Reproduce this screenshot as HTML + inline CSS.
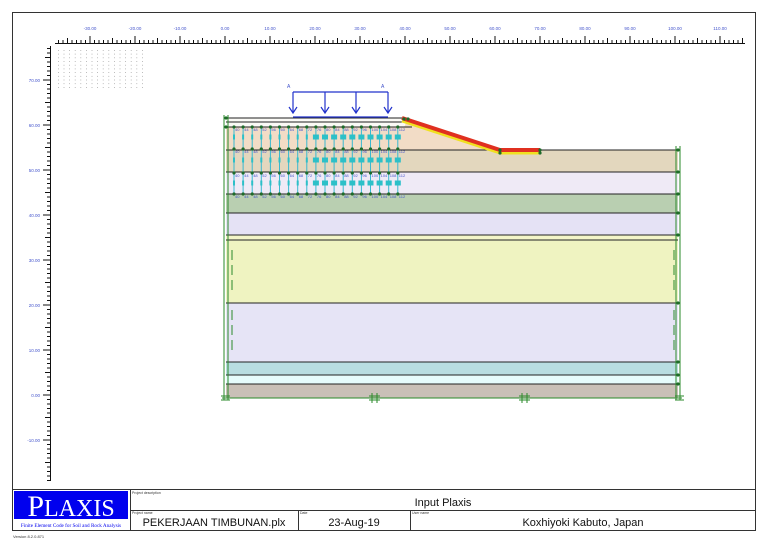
<!DOCTYPE html>
<html><head><meta charset="utf-8"><style>
html,body{margin:0;padding:0;background:#fff;width:768px;height:543px;overflow:hidden;font-family:"Liberation Sans",sans-serif}
svg{position:absolute;left:0;top:0}
</style></head><body>
<svg id="s" width="768" height="543" xmlns="http://www.w3.org/2000/svg" font-family="Liberation Sans, sans-serif">
<rect x="12.5" y="12.5" width="743" height="518" fill="none" stroke="#333" stroke-width="1"/>
<!-- soil layers -->
<rect x="226" y="150" width="452" height="22" fill="#e3d7be"/>
<rect x="226" y="172" width="452" height="22" fill="#efeaf6"/>
<rect x="226" y="194" width="452" height="19" fill="#b9cfb1"/>
<rect x="226" y="213" width="452" height="22" fill="#e5e2f5"/>
<rect x="226" y="235" width="452" height="5" fill="#f3f5c8"/>
<rect x="226" y="240" width="452" height="63" fill="#eff3c1"/>
<rect x="226" y="303" width="452" height="59" fill="#e6e4f6"/>
<rect x="226" y="362" width="452" height="13" fill="#b8dde1"/>
<rect x="226" y="375" width="452" height="9" fill="#e6fcfc"/>
<rect x="226" y="384" width="452" height="14" fill="#c9c0b7"/>
<polygon points="226,127 404,127 408,119 500,150 226,150" fill="#f2dcc6"/>
<rect x="226" y="118" width="178" height="9" fill="#fbfaf6"/>
<g stroke="#222" stroke-width="1">
<line x1="226" y1="118" x2="406" y2="118"/><line x1="226" y1="122" x2="404" y2="122"/><line x1="226" y1="127" x2="412" y2="127"/>
<line x1="226" y1="150" x2="678" y2="150"/><line x1="226" y1="172" x2="678" y2="172"/><line x1="226" y1="194" x2="678" y2="194"/>
<line x1="226" y1="213" x2="678" y2="213"/><line x1="226" y1="235" x2="678" y2="235"/><line x1="226" y1="240" x2="678" y2="240"/>
<line x1="226" y1="303" x2="678" y2="303"/><line x1="226" y1="362" x2="678" y2="362"/><line x1="226" y1="375" x2="678" y2="375"/>
<line x1="226" y1="384" x2="678" y2="384"/>
</g>
<polyline points="402,121 500,153 540,153" fill="none" stroke="#f0e020" stroke-width="3"/>
<polyline points="402,118 500,150 540,150" fill="none" stroke="#e03020" stroke-width="4"/>
<g stroke="#2a8a2a" stroke-width="1" fill="none">
<line x1="224" y1="115" x2="224" y2="400"/><line x1="228" y1="115" x2="228" y2="400"/>
<line x1="676" y1="146" x2="676" y2="400"/><line x1="680" y1="146" x2="680" y2="400"/>
<line x1="222" y1="398" x2="682" y2="398"/>
<path d="M232 250v10M232 265v10M232 280v10M232 310v10M232 325v10M232 340v10M674 250v10M674 265v10M674 280v10M674 310v10M674 325v10M674 340v10" stroke-dasharray="0"/>
<path d="M372 393v10M377 393v10M369 396h11M369 400h11M522 393v10M527 393v10M519 396h11M519 400h11M221 396h9M221 400h9M675 396h9M675 400h9"/>
</g>
<!-- load -->
<g stroke="#2233cc" stroke-width="1.2" fill="none">
<line x1="293" y1="92" x2="388" y2="92"/><line x1="293" y1="117" x2="388" y2="117"/>
<path d="M293 92v21M325 92v21M356 92v21M388 92v21M289 107l4 6 4-6M321 107l4 6 4-6M352 107l4 6 4-6M384 107l4 6 4-6"/>
</g>
<text x="287" y="88" font-size="5" fill="#4455cc">A</text><text x="381" y="88" font-size="5" fill="#4455cc">A</text>
<g id="cols"></g>
<g id="ruler" stroke="#111" stroke-width="1"></g>
<g id="lbl" font-size="4.5" fill="#4455cc"></g>
<!-- title block -->
<g stroke="#333" stroke-width="1" fill="none">
<line x1="12" y1="489.5" x2="756" y2="489.5"/>
<line x1="130.5" y1="489" x2="130.5" y2="531"/>
<line x1="130" y1="510.5" x2="756" y2="510.5"/>
<line x1="298.5" y1="510" x2="298.5" y2="531"/>
<line x1="410.5" y1="510" x2="410.5" y2="531"/>
</g>
<rect x="14" y="491" width="114" height="28" fill="#0000ee"/>
<text x="71" y="516" font-family="Liberation Serif, serif" font-size="30" fill="#fff" text-anchor="middle">P<tspan font-size="24">LAXIS</tspan></text>
<text x="71" y="527" font-family="Liberation Serif, serif" font-size="5.2" fill="#0000ee" text-anchor="middle">Finite Element Code for Soil and Rock Analysis</text>
<text x="13" y="538" font-size="4" fill="#333">Version 8.2.0.871</text>
<text x="132" y="494" font-size="3.5" fill="#333">Project description</text>
<text x="132" y="514" font-size="3.5" fill="#333">Project name</text>
<text x="300" y="514" font-size="3.5" fill="#333">Date</text>
<text x="412" y="514" font-size="3.5" fill="#333">User name</text>
<text x="443" y="506" font-size="11" fill="#111" text-anchor="middle">Input Plaxis</text>
<text x="214" y="526" font-size="11" fill="#111" text-anchor="middle">PEKERJAAN TIMBUNAN.plx</text>
<text x="354" y="526" font-size="11" fill="#111" text-anchor="middle">23-Aug-19</text>
<text x="583" y="526" font-size="11" fill="#111" text-anchor="middle">Koxhiyoki Kabuto, Japan</text>
</svg>
<script>
var NS="http://www.w3.org/2000/svg";
function el(p,t,a,txt){var e=document.createElementNS(NS,t);for(var k in a)e.setAttribute(k,a[k]);if(txt)e.textContent=txt;document.getElementById(p).appendChild(e);return e;}
// ruler x
el('ruler','line',{x1:55,y1:43.5,x2:745,y2:43.5});
for(var u=-37;u<=115;u++){var x=225+u*4.5;if(x<55||x>745)continue;var h=(u%10==0)?7:(u%5==0?5:3);el('ruler','line',{x1:x,y1:43,x2:x,y2:43-h});
 if(u%10==0&&u>=-30&&u<=110)el('lbl','text',{x:x,y:30,'text-anchor':'middle'},u.toFixed(2));}
// ruler y
el('ruler','line',{x1:50.5,y1:46,x2:50.5,y2:481});
for(var v=-19;v<=77;v++){var y=395-v*4.5;if(y<46||y>481)continue;var h=(v%10==0)?7:(v%5==0?5:3);el('ruler','line',{x1:50,y1:y,x2:50-h,y2:y});
 if(v%10==0)el('lbl','text',{x:40,y:y+2,'text-anchor':'end'},v.toFixed(2));}
// dot grid
for(var i=0;i<16;i++)for(var j=0;j<11;j++)el('cols','rect',{x:58+i*5.6,y:50+j*3.7,width:0.8,height:0.8,fill:'#999'});
// columns
for(var c=0;c<19;c++){var x=234+c*9.1;
 el('cols','line',{x1:x,y1:127,x2:x,y2:194,stroke:'#39b8d0','stroke-width':1});
 [137,160,183].forEach(function(y){var big=x>315;el('cols','rect',{x:x-(big?3:1),y:y-2.5,width:big?6:2,height:5,fill:'#2cc0c8'});});
 [127,149,173,194].forEach(function(y){el('cols','circle',{cx:x,cy:y,r:1.6,fill:'#1f6a2a'});
  el('lbl','text',{x:x+1,y:y+4,'font-size':4},String(40+c*4));});
}
[[404,119],[408,119],[500,150],[540,150],[500,153],[540,153],[226,118],[226,127],[678,150],[678,172],[678,194],[678,213],[678,235],[678,303],[678,362],[678,375],[678,384]].forEach(function(p){el('cols','circle',{cx:p[0],cy:p[1],r:1.6,fill:'#1f6a2a'});});
</script>
</body></html>
